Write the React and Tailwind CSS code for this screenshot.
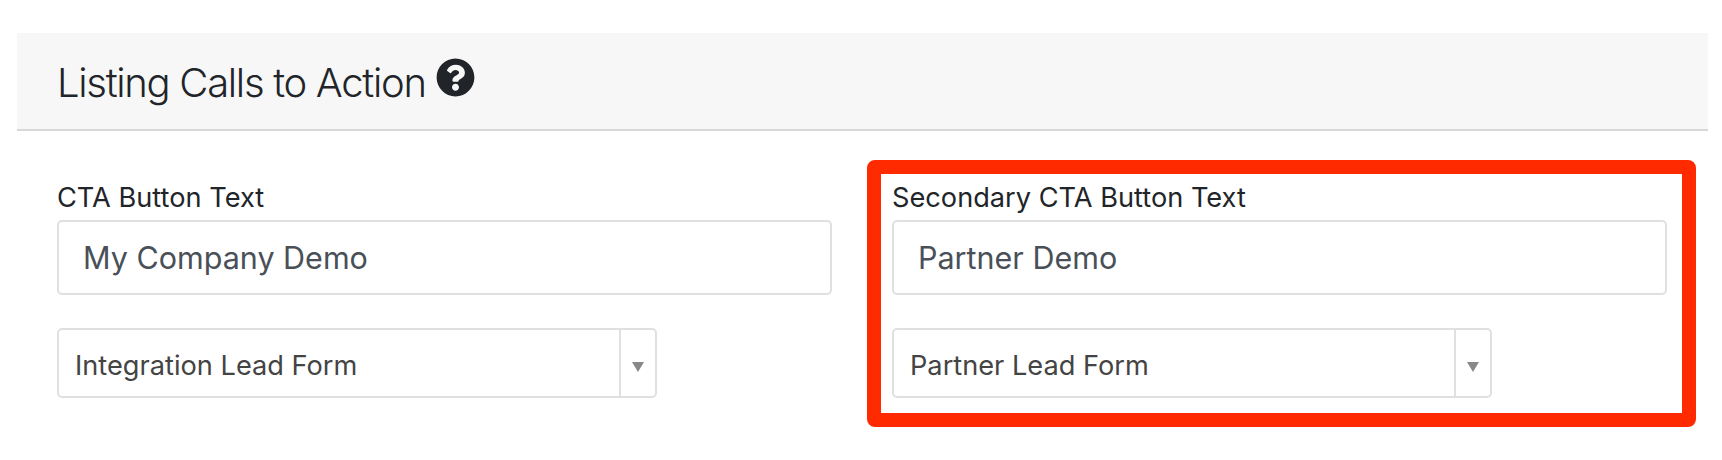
import React from "react";
import { FaQuestionCircle } from "react-icons/fa";

const font = "font-['Inter','Liberation_Sans',sans-serif]";

const Field = ({ label, value, select }) => (
  <div>
    <div className="text-[27.2px] leading-[36px] mb-1 text-[#212529]">{label}</div>
    <div className="h-[75px] w-full flex items-center pl-[24px] border-2 border-[#e0e0e0] rounded-[5px] text-[30.5px] text-[#495057] bg-white">
      {value}
    </div>
    <div className="mt-[33px] h-[70px] w-[600px] flex border-2 border-[#e0e0e0] rounded-[5px] bg-white">
      <div className="flex-1 flex items-center pl-[16px] pt-[7px] text-[27.2px] text-[#444444]">{select}</div>
      <div className="w-[36px] flex items-center justify-center border-l-2 border-[#e0e0e0] pt-[8px]">
        <svg width="12" height="10" viewBox="0 0 12 10">
          <polygon points="0,0 12,0 6,10" fill="#888888" />
        </svg>
      </div>
    </div>
  </div>
);

export default function App() {
  return (
    <div className={`${font} w-[1722px] h-[460px] bg-white pt-[33px] overflow-hidden`}>
      <div className="ml-[17px] w-[1691px] h-[98px] bg-[#f7f7f7] border-b-2 border-[#d8d8d8] flex items-center pl-[40px] pt-[3px]">
        <h1 className="text-[40px] font-light tracking-[-1.3px] text-[#212529]">Listing Calls to Action</h1>
        <FaQuestionCircle className="ml-[10px] mt-[-10px] text-[39px] text-[#212529]" />
      </div>

      <div className="flex items-start ml-[57px] mt-[29px]">
        <div className="w-[775px] mt-[20px]">
          <Field label="CTA Button Text" value="My Company Demo" select="Integration Lead Form" />
        </div>
        <div className="ml-[35px] w-[829px] border-[14px] border-[#ff2a00] rounded-[8px] pt-[6px] pl-[11px] pr-[15px] pb-[15px]">
          <Field label="Secondary CTA Button Text" value="Partner Demo" select="Partner Lead Form" />
        </div>
      </div>
    </div>
  );
}
